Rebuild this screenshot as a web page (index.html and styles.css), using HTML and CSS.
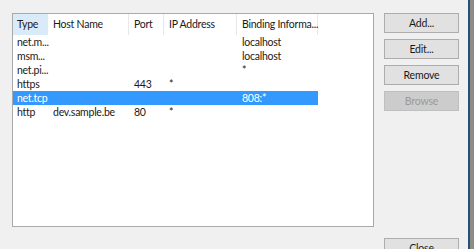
FILE: index.html
```html
<!DOCTYPE html>
<html>
<head>
<meta charset="utf-8">
<link rel="stylesheet" href="styles.css">
</head>
<body>
<div class="window">
  <div class="content">
    <div class="list">
      <div class="row header">
        <div class="cell sorted">Type</div>
        <div class="cell">Host Name</div>
        <div class="cell">Port</div>
        <div class="cell">IP Address</div>
        <div class="cell">Binding Informa...</div>
      </div>
      <div class="row">
        <div class="cell">net.m...</div><div class="cell"></div><div class="cell"></div><div class="cell"></div><div class="cell">localhost</div>
      </div>
      <div class="row">
        <div class="cell">msm...</div><div class="cell"></div><div class="cell"></div><div class="cell"></div><div class="cell">localhost</div>
      </div>
      <div class="row">
        <div class="cell">net.pi...</div><div class="cell"></div><div class="cell"></div><div class="cell"></div><div class="cell">*</div>
      </div>
      <div class="row">
        <div class="cell">https</div><div class="cell"></div><div class="cell">443</div><div class="cell">*</div><div class="cell"></div>
      </div>
      <div class="row selected">
        <div class="cell">net.tcp</div><div class="cell"></div><div class="cell"></div><div class="cell"></div><div class="cell">808:*</div>
      </div>
      <div class="row">
        <div class="cell">http</div><div class="cell">dev.sample.be</div><div class="cell">80</div><div class="cell">*</div><div class="cell"></div>
      </div>
    </div>
    <div class="buttons">
      <button class="btn">Add...</button>
      <button class="btn">Edit...</button>
      <button class="btn">Remove</button>
      <button class="btn" disabled>Browse</button>
    </div>
  </div>
  <div class="footer">
    <button class="btn">Close</button>
  </div>
</div>
</body>
</html>
```

FILE: styles.css
```css
html, body {
  margin: 0;
  padding: 0;
  background: #8d8b84;
  overflow: hidden;
}
body {
  font-family: "Lato", "Noto Sans", sans-serif;
  font-size: 10.5px;
  letter-spacing: -0.25px;
  color: #1a1a1a;
}
.window {
  box-sizing: border-box;
  width: 470px;
  height: 249px;
  background: #f0f0f0;
  border-right: 2px solid #25507d;
  padding: 13px 0 0 12px;
  overflow: hidden;
}
.content {
  display: flex;
  gap: 10px;
}
.list {
  box-sizing: border-box;
  width: 362px;
  height: 214px;
  border: 1px solid #a9a9a9;
  background: #fff;
}
.row {
  display: grid;
  grid-template-columns: 35px 81px 35px 73px 81px;
  height: 14px;
  width: 305px;
  align-items: center;
}
.cell {
  padding-left: 5px;
  white-space: nowrap;
  line-height: 14px;
  height: 14px;
}
.header {
  height: 21px;
}
.header .cell {
  height: 21px;
  line-height: 21px;
  border-right: 1px solid #e8e8e8;
}
.header .cell.sorted {
  background: #d9ebf9;
  border-right-color: #d9ebf9;
}
.row .cell:first-child {
  padding-left: 4px;
}
.selected {
  background: #3399ff;
  color: #fff;
}
.buttons {
  display: flex;
  flex-direction: column;
  gap: 6px;
}
.btn {
  box-sizing: border-box;
  width: 75px;
  height: 20px;
  background: #e1e1e1;
  border: 1px solid #adadad;
  font-family: "Lato", "Noto Sans", sans-serif;
  font-size: 10.5px;
  letter-spacing: -0.2px;
  color: #1a1a1a;
  padding: 0;
  margin: 0;
}
.btn:disabled {
  background: #cccccc;
  border-color: #bfbfbf;
  color: #9a9a9a;
}
.footer {
  padding: 11px 0 0 372px;
}
```
